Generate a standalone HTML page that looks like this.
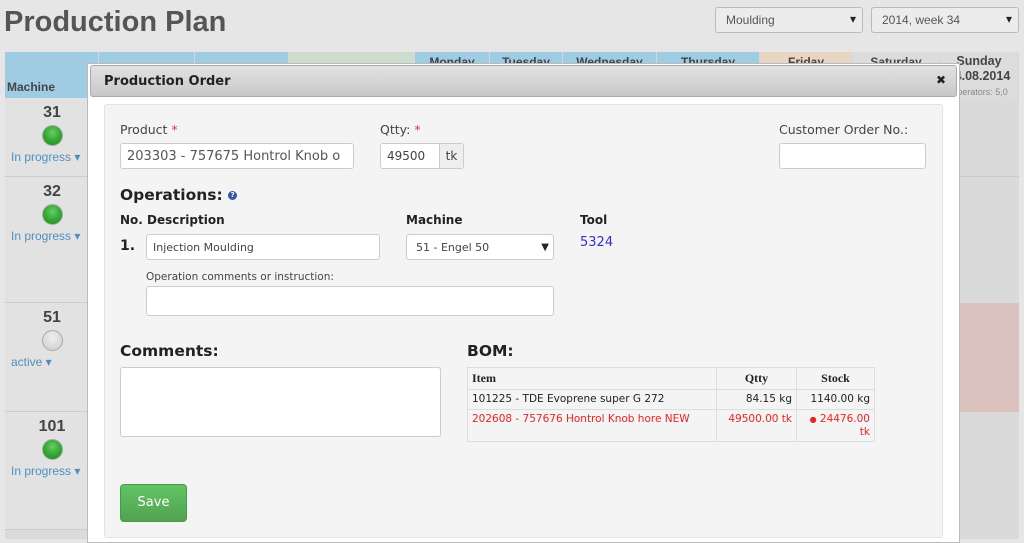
<!DOCTYPE html>
<html><head><meta charset="utf-8"><style>
*{box-sizing:border-box;margin:0;padding:0}
body{width:1024px;height:539px;overflow:hidden;background:#e6e6e6;font-family:"Liberation Sans",sans-serif;position:relative;color:#222}
.a{position:absolute}
.m{font-family:"DejaVu Sans",sans-serif}
h1{position:absolute;left:4px;top:6px;font-size:29px;font-weight:bold;color:#555}
.sel{position:absolute;top:7px;height:26px;border:1px solid #bbb;border-radius:3px;background:#ececec;font-size:12px;color:#555;padding:5px 10px}
.sel:after{content:"▾";position:absolute;right:6px;top:4px;font-size:12px;color:#222}
.hd{position:absolute;top:52px;height:46px;font-size:12px;font-weight:bold;color:#444;text-align:center;border-right:1px solid #d8d8d8;padding-top:3px}
.mc{position:absolute;left:5px;width:94px;background:#e2e2e2;border-bottom:1px solid #ccc;text-align:center}
.mc b{display:block;font-size:16px;color:#444;margin-top:6px}
.led{width:21px;height:21px;border-radius:50%;margin:3px auto 2px;background:radial-gradient(circle at 50% 35%,#6c6 0,#3a3 50%,#282 100%);border:1px solid #aaa}
.mc span{font-size:12px;color:#4f8fc0;display:block;text-align:left;padding-left:6px;margin-top:4px}
.in{position:absolute;background:#fff;border:1px solid #ccc;border-radius:3px;font-size:11px;color:#444;padding:0 6px;display:flex;align-items:center;font-family:"DejaVu Sans",sans-serif}
.lbl{position:absolute;font-size:12.5px;color:#444;font-family:"DejaVu Sans",sans-serif}
.lbl i{color:#e33;font-style:normal}
.h{position:absolute;font-family:"DejaVu Sans",sans-serif;font-weight:bold}
td,th{border:1px solid #ddd;font-size:10.5px;padding:3px 4px;vertical-align:top;font-family:"DejaVu Sans",sans-serif;white-space:nowrap}
th{font-family:"Liberation Serif",serif;font-size:12px}
</style></head><body>
<h1>Production Plan</h1>
<div class="sel" style="left:715px;width:148px">Moulding</div>
<div class="sel" style="left:871px;width:148px">2014, week 34</div>
<div class="a" style="left:5px;top:52px;width:1014px;height:487px;background:#dadada"></div>
<div class="hd" style="left:5px;width:94px;background:#9fcbe3;text-align:left;padding:28px 0 0 2px">Machine</div>
<div class="hd" style="left:99px;width:96px;background:#9fcbe3"></div>
<div class="hd" style="left:195px;width:94px;background:#9fcbe3"></div>
<div class="hd" style="left:289px;width:126px;background:#cddccd"></div>
<div class="hd" style="left:415px;width:75px;background:#9fcbe3">Monday</div>
<div class="hd" style="left:490px;width:73px;background:#9fcbe3">Tuesday</div>
<div class="hd" style="left:563px;width:94px;background:#9fcbe3">Wednesday</div>
<div class="hd" style="left:657px;width:103px;background:#9fcbe3">Thursday</div>
<div class="hd" style="left:760px;width:93px;background:#e8d5c3">Friday</div>
<div class="hd" style="left:853px;width:87px;background:#dcdcdc">Saturday</div>
<div class="hd" style="left:940px;width:79px;background:#dcdcdc;padding-top:2px;line-height:15px;font-size:12.5px">Sunday<br>24.08.2014<br><span style="font-size:9px;font-weight:normal;color:#888">Operators: 5,0</span></div>
<div class="a" style="left:960px;top:98px;width:59px;height:79px;background:#dadada;border-bottom:1px solid #ccc"></div>
<div class="a" style="left:960px;top:303px;width:59px;height:109px;background:#dbc2be"></div>
<div class="mc" style="top:98px;height:79px"><b>31</b><div class="led"></div><span>In progress ▾</span></div>
<div class="mc" style="top:177px;height:126px"><b>32</b><div class="led"></div><span>In progress ▾</span></div>
<div class="mc" style="top:303px;height:109px"><b>51</b><div class="led" style="background:radial-gradient(circle at 50% 35%,#eee,#ccc)"></div><span>active ▾</span></div>
<div class="mc" style="top:412px;height:118px"><b>101</b><div class="led"></div><span>In progress ▾</span></div>

<div class="a" style="left:87px;top:63px;width:873px;height:480px;background:#fff;border:1px solid #bbb"></div>
<div class="a m" style="left:90px;top:65px;width:867px;height:32px;background:linear-gradient(#e2e2e2,#c8c8c8);border:1px solid #aaa;border-radius:3px;font-size:13px;font-weight:bold;padding:8px 13px;color:#222">Production Order<span style="position:absolute;right:10px;top:7px;font-size:12px">✖</span></div>
<div class="a" style="left:104px;top:104px;width:839px;height:434px;background:#f4f4f4;border:1px solid #e3e3e3;border-radius:3px"></div>

<div class="lbl" style="left:120px;top:122px">Product <i>*</i></div>
<div class="in" style="left:120px;top:143px;width:234px;height:26px;font-size:13px;color:#555;overflow:hidden;white-space:nowrap">203303 - 757675 Hontrol Knob o</div>
<div class="lbl" style="left:380px;top:122px">Qtty: <i>*</i></div>
<div class="in" style="left:380px;top:143px;width:84px;height:26px;font-size:12px;padding:0">
<span style="padding:0 6px;flex:1">49500</span><span style="background:#eee;border-left:1px solid #ccc;height:100%;width:24px;display:flex;align-items:center;justify-content:center">tk</span></div>
<div class="lbl" style="left:779px;top:122px">Customer Order No.:</div>
<div class="in" style="left:779px;top:143px;width:147px;height:26px"></div>

<div class="h" style="left:120px;top:186px;font-size:15.5px">Operations: <span style="display:inline-block;width:9px;height:9px;border-radius:50%;background:#35a;color:#fff;font-size:7px;text-align:center;line-height:9px;vertical-align:middle">?</span></div>
<div class="h" style="left:120px;top:213px;font-size:12px">No. Description</div>
<div class="h" style="left:406px;top:213px;font-size:12px">Machine</div>
<div class="h" style="left:580px;top:213px;font-size:12px">Tool</div>
<div class="h" style="left:120px;top:238px;font-size:14px">1.</div>
<div class="in" style="left:146px;top:234px;width:234px;height:26px">Injection Moulding</div>
<div class="in" style="left:406px;top:234px;width:148px;height:26px;padding-left:9px">51 - Engel 50<span style="position:absolute;right:4px;font-size:10px;color:#222">▼</span></div>
<div class="a m" style="left:580px;top:235px;font-size:13px;color:#33c">5324</div>
<div class="a m" style="left:146px;top:271px;font-size:10.5px;color:#444">Operation comments or instruction:</div>
<div class="in" style="left:146px;top:286px;width:408px;height:30px"></div>

<div class="h" style="left:120px;top:342px;font-size:15.5px">Comments:</div>
<div class="in" style="left:120px;top:367px;width:321px;height:70px"></div>
<div class="h" style="left:467px;top:342px;font-size:15.5px">BOM:</div>
<table class="a" style="left:467px;top:367px;width:408px;border-collapse:collapse;background:#f4f4f4;table-layout:fixed">
<tr style="height:20px"><th style="text-align:left;width:249px">Item</th><th style="width:80px">Qtty</th><th>Stock</th></tr>
<tr style="height:20px"><td>101225 - TDE Evoprene super G 272</td><td style="text-align:right">84.15 kg</td><td style="text-align:right">1140.00 kg</td></tr>
<tr style="color:#e22;height:32px"><td>202608 - 757676 Hontrol Knob hore NEW</td><td style="text-align:right">49500.00 tk</td><td style="text-align:right;line-height:12px;white-space:normal"><span style="font-size:8px">●</span> 24476.00<br>tk</td></tr>
</table>
<div class="a m" style="left:120px;top:484px;width:67px;height:38px;background:linear-gradient(#62c462,#51a351);border:1px solid #4a9a4a;border-radius:4px;color:#fff;font-size:13px;text-align:center;line-height:36px">Save</div>
</body></html>
